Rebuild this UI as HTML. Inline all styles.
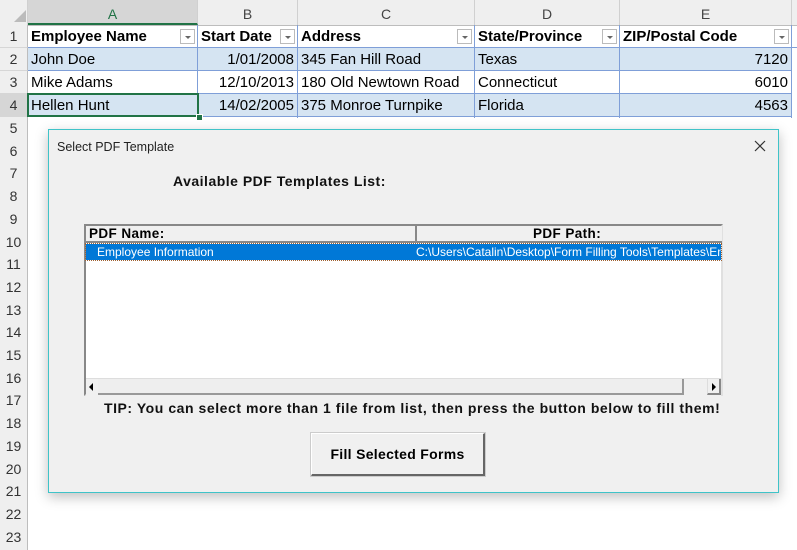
<!DOCTYPE html>
<html><head><meta charset="utf-8"><style>
body{margin:0;width:797px;height:550px;overflow:hidden;background:#fff;font-family:"Liberation Sans",sans-serif;position:relative}
.a{position:absolute}
.ch{top:0;height:25px;background:#efefef;border-bottom:1px solid #bdbdbd}
.col{top:0;height:25px;border-right:1px solid #d0d0d0;text-align:center;line-height:29px;font-size:14px;color:#444;box-sizing:border-box}
.rh{left:0;width:28px;background:#efefef;border-right:1px solid #bdbdbd;box-sizing:border-box;border-bottom:1px solid #d6d6d6;text-align:center;font-size:14px;color:#333}
.cell{box-sizing:border-box;font-size:15px;line-height:24px;padding:0 3px;white-space:nowrap;overflow:hidden;border-right:1px solid #7f9fd8}
.b{font-weight:bold}
.dd{position:absolute;right:2px;top:4px;width:15px;height:15px;border:1px solid #bbb;background:#fff;box-sizing:border-box}
.dd:after{content:"";position:absolute;left:4px;top:6px;border:3px solid transparent;border-top:3px solid #666}
.dlg{font-family:"Liberation Sans",sans-serif}
</style></head><body>
<div class="a ch" style="left:0;width:797px"></div>
<div class="a col" style="left:0;width:28px;"></div>
<div class="a" style="left:14px;top:10px;border:6px solid transparent;border-right-color:#bbb;border-bottom-color:#bbb"></div>
<div class="a col" style="left:28px;width:170px;background:#d6d6d6;color:#217346;border-bottom:2px solid #217346">A</div>
<div class="a col" style="left:198px;width:100px">B</div>
<div class="a col" style="left:298px;width:177px">C</div>
<div class="a col" style="left:475px;width:145px">D</div>
<div class="a col" style="left:620px;width:172px">E</div>

<div class="a rh" style="top:25px;height:23px;line-height:23px">1</div>
<div class="a rh" style="top:48px;height:23px;line-height:23px">2</div>
<div class="a rh" style="top:71px;height:23px;line-height:23px">3</div>
<div class="a rh" style="top:94px;height:23px;line-height:23px;background:#d6d6d6">4</div>
<div class="a" style="left:0;top:117px;width:28px;height:433px;background:#efefef;border-right:1px solid #bdbdbd;box-sizing:border-box;font-size:14px;color:#333;text-align:center;line-height:22.7px">5<br>6<br>7<br>8<br>9<br>10<br>11<br>12<br>13<br>14<br>15<br>16<br>17<br>18<br>19<br>20<br>21<br>22<br>23</div>

<div class="a" style="left:28px;top:25px;width:769px;height:23px;border-bottom:1px solid #7f9fd8;box-sizing:border-box"></div>
<div class="a" style="left:28px;top:48px;width:764px;height:23px;background:#d5e4f2;border-bottom:1px solid #7f9fd8;box-sizing:border-box"></div>
<div class="a" style="left:28px;top:71px;width:764px;height:23px;border-bottom:1px solid #7f9fd8;box-sizing:border-box"></div>
<div class="a" style="left:28px;top:94px;width:764px;height:23px;background:#d5e4f2;border-bottom:1px solid #7f9fd8;box-sizing:border-box"></div>

<div class="a cell b" style="left:28px;top:25px;width:170px;height:23px">Employee Name<span class="dd"></span></div>
<div class="a cell b" style="left:198px;top:25px;width:100px;height:23px">Start Date<span class="dd"></span></div>
<div class="a cell b" style="left:298px;top:25px;width:177px;height:23px">Address<span class="dd"></span></div>
<div class="a cell b" style="left:475px;top:25px;width:145px;height:23px">State/Province<span class="dd"></span></div>
<div class="a cell b" style="left:620px;top:25px;width:172px;height:23px">ZIP/Postal Code<span class="dd"></span></div>

<div class="a cell" style="left:28px;top:48px;width:170px">John Doe</div>
<div class="a cell" style="left:198px;top:48px;width:100px;text-align:right">1/01/2008</div>
<div class="a cell" style="left:298px;top:48px;width:177px">345 Fan Hill Road</div>
<div class="a cell" style="left:475px;top:48px;width:145px">Texas</div>
<div class="a cell" style="left:620px;top:48px;width:172px;text-align:right">7120</div>

<div class="a cell" style="left:28px;top:71px;width:170px">Mike Adams</div>
<div class="a cell" style="left:198px;top:71px;width:100px;text-align:right">12/10/2013</div>
<div class="a cell" style="left:298px;top:71px;width:177px">180 Old Newtown Road</div>
<div class="a cell" style="left:475px;top:71px;width:145px">Connecticut</div>
<div class="a cell" style="left:620px;top:71px;width:172px;text-align:right">6010</div>

<div class="a cell" style="left:28px;top:94px;width:170px">Hellen Hunt</div>
<div class="a cell" style="left:198px;top:94px;width:100px;text-align:right">14/02/2005</div>
<div class="a cell" style="left:298px;top:94px;width:177px">375 Monroe Turnpike</div>
<div class="a cell" style="left:475px;top:94px;width:145px">Florida</div>
<div class="a cell" style="left:620px;top:94px;width:172px;text-align:right">4563</div>
<div class="a" style="left:27px;top:93px;width:172px;height:24px;border:2px solid #217346;box-sizing:border-box"></div>
<div class="a" style="left:196px;top:114px;width:5px;height:5px;background:#217346;border:1px solid #fff"></div>

<div class="a dlg" style="left:48px;top:129px;width:731px;height:364px;background:#f0f0f0;border:1px solid #3fc3c8;box-sizing:border-box;box-shadow:0 4px 12px rgba(0,0,0,.25)">
 <div class="a" style="left:8px;top:10px;font-size:12.5px;color:#222">Select PDF Template</div>
 <svg class="a" style="left:705px;top:10px" width="12" height="12"><path d="M1 1L11 11M11 1L1 11" stroke="#333" stroke-width="1.2"/></svg>
 <div class="a" style="left:124px;top:43px;font-size:14px;letter-spacing:0.5px;font-weight:bold;color:#111">Available PDF Templates List:</div>
 <div class="a" style="left:35px;top:94px;width:639px;height:172px;background:#fff;border:2px solid #888;border-right-color:#e0e0e0;border-bottom-color:#e0e0e0;box-sizing:border-box"></div>
 <div class="a" style="left:37px;top:96px;width:636px;height:17px;background:#f0f0f0;border-bottom:2px solid #888;box-sizing:border-box;font-size:13.5px;letter-spacing:0.4px;font-weight:bold;line-height:16px">
   <span style="position:absolute;left:3px">PDF Name:</span>
   <span style="position:absolute;left:329px;top:0;height:15px;border-left:2px solid #888"></span>
   <span style="position:absolute;left:447px">PDF Path:</span>
 </div>
 <div class="a" style="left:37px;top:114px;width:635px;height:16px;background:#0078d7;color:#fff;font-size:12px;line-height:16px;white-space:nowrap;overflow:hidden;outline:1px dotted #a06030">
   <span style="position:absolute;left:11px">Employee Information</span>
   <span style="position:absolute;left:330px">C:\Users\Catalin\Desktop\Form Filling Tools\Templates\Employee</span>
 </div>
 <div class="a" style="left:37px;top:248px;width:635px;height:17px;background:#f0f0f0;border-top:1px solid #ddd">
   <div class="a" style="left:3px;top:4px;border:4px solid transparent;border-right:4px solid #000;border-left:0"></div>
   <div class="a" style="left:12px;top:0;width:586px;height:16px;border-right:2px solid #999;border-bottom:2px solid #999;box-sizing:border-box;background:#eee"></div>
   <div class="a" style="left:621px;top:0;width:14px;height:16px;border-left:1px solid #ddd;border-right:2px solid #888;border-bottom:2px solid #888;box-sizing:border-box"></div>
   <div class="a" style="left:626px;top:4px;border:4px solid transparent;border-left:4px solid #000;border-right:0"></div>
 </div>
 <div class="a" style="left:55px;top:270px;font-size:14px;letter-spacing:0.55px;font-weight:bold;color:#111;white-space:nowrap">TIP: You can select more than 1 file from list, then press the button below to fill them!</div>
 <div class="a" style="left:262px;top:303px;width:174px;height:43px;background:#f0f0f0;border:1px solid #fff;border-right:2px solid #666;border-bottom:2px solid #666;box-sizing:border-box;outline:1px solid #ccc;text-align:center;line-height:40px;font-size:14px;letter-spacing:0.3px;font-weight:bold">Fill Selected Forms</div>
</div>
</body></html>
